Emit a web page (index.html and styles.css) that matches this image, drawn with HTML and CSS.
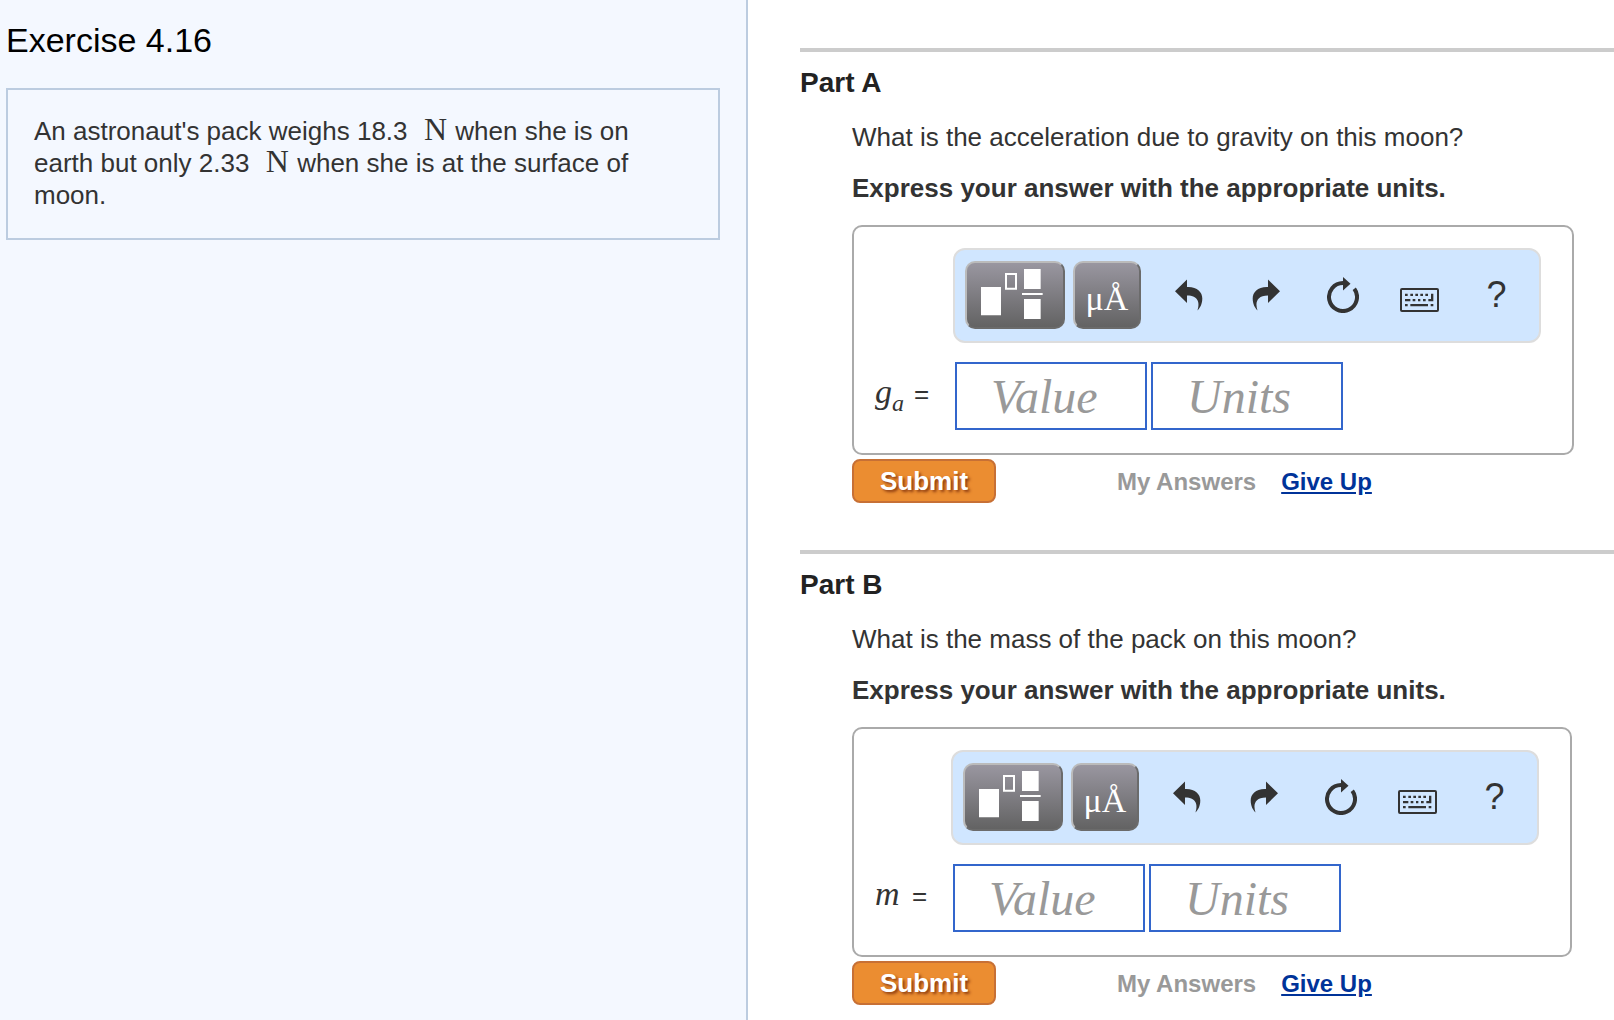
FILE: index.html
```html
<!DOCTYPE html>
<html lang="en">
<head>
<meta charset="utf-8">
<title>Exercise 4.16</title>
<link rel="stylesheet" href="styles.css">
</head>
<body>
<svg class="sprite" aria-hidden="true">
  <symbol id="templates" viewBox="0 0 300 204">
    <path fill="#fff" d="M48 78h60v85H48zM177 24h50v60h-50zM171 96h62v6h-62zM177 114h50v60h-50z"/>
    <path fill="none" stroke="#fff" stroke-width="6" d="M123 39h30v44h-30z"/>
  </symbol>
  <symbol id="undo" viewBox="0 0 28 32">
    <path d="M0 12.3 12 .6V8C22 7.5 27.3 13 27.3 19.5 27.3 25 25 29 22.5 31.5 25 24 23.5 16.5 12 16.5V24Z"/>
  </symbol>
  <symbol id="redo" viewBox="0 0 28 32">
    <path d="M28 12.3 16 .6V8C6 7.5.7 13 .7 19.5.7 25 3 29 5.500 31.5 3 24 4.500 16.5 16 16.5V24Z"/>
  </symbol>
  <symbol id="reset" viewBox="0 0 32 36">
    <path fill="none" stroke="currentColor" stroke-width="4" d="M27.300 11.700A14 14 0 1 1 16 6"/>
    <path d="M16 0 23.500 6.700 16 13.500Z"/>
  </symbol>
  <symbol id="keyboard" viewBox="0 0 117 72">
    <rect x="3" y="3" width="111" height="66" rx="3" fill="none" stroke="currentColor" stroke-width="6"/>
    <path d="M15 17h8v7h-8zM31 17h8v7h-8zM46 17h8v7h-8zM61 17h8v7h-8zM76 17h8v7h-8zM93 17h7v23H85v-7h8zM15 33h16v7H15zM38 33h8v7h-8zM54 33h7v7h-7zM69 33h8v7h-8zM15 48h8v7h-8zM31 48h53v7H31zM92 48h8v7h-8z"/>
  </symbol>
</svg>
<div class="page">
  <aside class="problem">
    <h1 class="problem-title">Exercise 4.16</h1>
    <div class="statement">
      <p>An astronaut's pack weighs 18.3 &nbsp;<span class="unit">N</span> when she is on earth but only 2.33 &nbsp;<span class="unit">N</span> when she is at the surface of moon.</p>
    </div>
  </aside>
  <main class="parts">
    <section class="part">
      <h2 class="part-title">Part A</h2>
      <form class="part-body">
        <p class="question">What is the acceleration due to gravity on this moon?</p>
        <p class="instruction">Express your answer with the appropriate units.</p>
        <div class="answer">
          <div class="toolbar">
            <button type="button" class="tool-key tool-key-wide" aria-label="Templates"><svg class="icon-templates"><use href="#templates"/></svg></button>
            <button type="button" class="tool-key tool-key-symbols">μÅ</button>
            <div class="tools">
              <button type="button" class="tool" aria-label="Undo"><svg class="icon-arrow"><use href="#undo"/></svg></button>
              <button type="button" class="tool" aria-label="Redo"><svg class="icon-arrow"><use href="#redo"/></svg></button>
              <button type="button" class="tool" aria-label="Reset"><svg class="icon-reset"><use href="#reset"/></svg></button>
              <button type="button" class="tool" aria-label="Keyboard shortcuts"><svg class="icon-keyboard"><use href="#keyboard"/></svg></button>
              <button type="button" class="tool">?</button>
            </div>
          </div>
          <label class="variable" for="value-a"><span class="symbol"><i>g</i><i class="subscript">a</i></span><span>=</span></label>
          <div class="fields">
            <input class="field" id="value-a" type="text" placeholder="Value">
            <input class="field" type="text" placeholder="Units" aria-label="Units">
          </div>
        </div>
        <div class="actions">
          <button type="button" class="submit">Submit</button>
          <span class="my-answers">My Answers</span>
          <a class="give-up" href="#">Give Up</a>
        </div>
      </form>
    </section>
    <section class="part">
      <h2 class="part-title">Part B</h2>
      <form class="part-body">
        <p class="question">What is the mass of the pack on this moon?</p>
        <p class="instruction">Express your answer with the appropriate units.</p>
        <div class="answer answer-narrow">
          <div class="toolbar">
            <button type="button" class="tool-key tool-key-wide" aria-label="Templates"><svg class="icon-templates"><use href="#templates"/></svg></button>
            <button type="button" class="tool-key tool-key-symbols">μÅ</button>
            <div class="tools">
              <button type="button" class="tool" aria-label="Undo"><svg class="icon-arrow"><use href="#undo"/></svg></button>
              <button type="button" class="tool" aria-label="Redo"><svg class="icon-arrow"><use href="#redo"/></svg></button>
              <button type="button" class="tool" aria-label="Reset"><svg class="icon-reset"><use href="#reset"/></svg></button>
              <button type="button" class="tool" aria-label="Keyboard shortcuts"><svg class="icon-keyboard"><use href="#keyboard"/></svg></button>
              <button type="button" class="tool">?</button>
            </div>
          </div>
          <label class="variable" for="value-b"><span class="symbol"><i>m</i></span><span>=</span></label>
          <div class="fields">
            <input class="field" id="value-b" type="text" placeholder="Value">
            <input class="field" type="text" placeholder="Units" aria-label="Units">
          </div>
        </div>
        <div class="actions">
          <button type="button" class="submit">Submit</button>
          <span class="my-answers">My Answers</span>
          <a class="give-up" href="#">Give Up</a>
        </div>
      </form>
    </section>
  </main>
</div>
</body>
</html>
```
FILE: styles.css
```css
* {
  box-sizing: border-box;
}

body {
  margin: 0;
  background: #fff;
  color: #333;
  font: 26px/32px "Liberation Sans", Arial, sans-serif;
}

h1, h2, p {
  margin: 0;
}

button, input {
  font: inherit;
  padding: 0;
}

.sprite {
  display: none;
}

.page {
  display: grid;
  grid-template-columns: minmax(0, 748fr) minmax(0, 866fr);
  min-height: 100vh;
}

/* Problem panel */
.problem {
  padding: 20px 26px 20px 6px;
  background: #f4f8ff;
  border-right: 2px solid #bccce0;
}

.problem-title {
  color: #000;
  font-size: 34px;
  font-weight: 400;
  line-height: 40px;
}

.statement {
  margin-top: 28px;
  padding: 25px 26px 27px;
  border: 2px solid #bccce0;
}

.statement p {
  max-width: 620px;
}

.unit {
  margin: 0 1px 0 2px;
  font-family: "Liberation Serif", serif;
  font-size: 32px;
  line-height: 20px;
}

/* Parts */
.parts {
  padding: 48px 0 0 52px;
}

.part {
  padding: 15px 0 47px;
  border-top: 4px solid #ccc;
}

.part:last-child {
  padding-bottom: 0;
}

.part-title {
  color: #222;
  font-size: 28px;
}

.part-body {
  padding: 22px 0 0 52px;
}

.instruction {
  margin-top: 19px;
  font-weight: 700;
}

.answer {
  display: grid;
  grid-template-columns: 78px 588px;
  row-gap: 19px;
  width: max-content;
  margin-top: 21px;
  padding: 21px 31px 23px 21px;
  border: 2px solid #aaa;
  border-radius: 10px;
}

.answer-narrow {
  grid-template-columns: 76px 588px;
}

.toolbar {
  grid-column: 2;
  display: flex;
  align-items: center;
  gap: 8px;
  height: 95px;
  padding: 0 4px 2px 10px;
  background: #d0e6ff;
  border: 2px solid #ddd;
  border-radius: 12px;
}

.tool-key {
  display: flex;
  align-items: center;
  justify-content: center;
  width: 68px;
  height: 68px;
  color: #fff;
  font: 34px/40px "Liberation Serif", serif;
  background: linear-gradient(#9b98a2, #616161) border-box;
  border: 2px solid;
  border-color: #bbb #6b6b6b #6b6b6b #bbb;
  border-radius: 10px;
}

.tool-key-wide {
  width: 100px;
}

.tool-key-symbols {
  padding-top: 8px;
}

.icon-templates {
  flex: none;
  width: 100px;
  height: 68px;
}

.tools {
  display: flex;
  flex: 1;
  margin-left: 2px;
}

.tool {
  display: flex;
  flex: 1;
  align-items: center;
  justify-content: center;
  height: 68px;
  color: #333;
  font-size: 36px;
  background: none;
  border: 0;
}

.tool svg {
  fill: currentColor;
}

.icon-arrow {
  width: 28px;
  height: 32px;
}

.icon-reset {
  width: 32px;
  height: 36px;
}

.icon-keyboard {
  width: 39px;
  height: 24px;
  margin-top: 10px;
}

.variable {
  display: flex;
  align-items: baseline;
  gap: 10px;
  padding-top: 14px;
}

.symbol {
  min-width: 27px;
  font-family: "Liberation Serif", serif;
  font-size: 34px;
}

.subscript {
  font-size: 24px;
  line-height: 20px;
  vertical-align: -8px;
}

.fields {
  display: flex;
  gap: 4px;
  padding-left: 2px;
}

.field {
  width: 192px;
  height: 68px;
  padding: 0 10px 0 34px;
  color: #333;
  font: italic 48px/60px "Liberation Serif", serif;
  background: #fff;
  border: 2px solid #36c;
  border-radius: 0;
}

.field::placeholder {
  color: #999;
  opacity: 1;
}

.actions {
  display: flex;
  align-items: baseline;
  margin-top: 4px;
  font-size: 24px;
  font-weight: 700;
}

.submit {
  width: 144px;
  height: 44px;
  color: #fff;
  font-size: 26px;
  text-shadow: 2px 2px 3px #8a3a10;
  background: #eb8d31;
  border: 2px solid #c77035;
  border-radius: 8px;
}

.my-answers {
  margin-left: 121px;
  color: #999;
}

.give-up {
  margin-left: 25px;
  color: #039;
}
```
